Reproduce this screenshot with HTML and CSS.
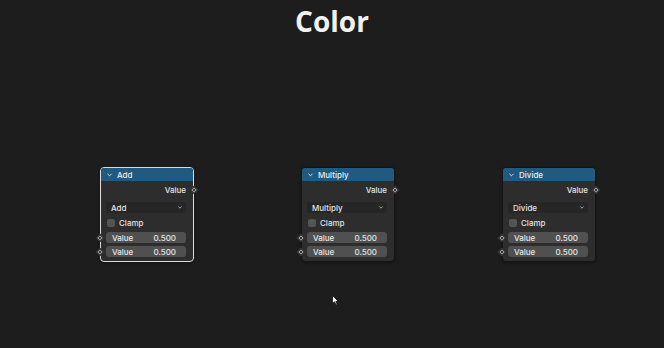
FILE: index.html
```html
<!DOCTYPE html>
<html>
<head>
<meta charset="utf-8">
<link rel="stylesheet" href="styles.css">
</head>
<body>
<div class="page">
  <h1 class="title">Color</h1>
  <div class="nodes">
    <div class="node selected">
      <div class="node-header"><svg class="chev" viewBox="0 0 6 4"><polyline points="0.5,0.5 3,3 5.5,0.5"/></svg><span>Add</span></div>
      <div class="node-body">
        <div class="row out"><span>Value</span><i class="socket right"></i></div>
        <div class="row drop-row"><div class="dropdown"><span>Add</span><svg class="dchev" viewBox="0 0 6 4"><polyline points="0.5,0.5 3,3 5.5,0.5"/></svg></div></div>
        <div class="row check-row"><span class="checkbox"></span><span>Clamp</span></div>
        <div class="row in first"><i class="socket left"></i><div class="field"><span>Value</span><span>0.500</span></div></div>
        <div class="row in"><i class="socket left"></i><div class="field"><span>Value</span><span>0.500</span></div></div>
      </div>
    </div>
    <div class="node">
      <div class="node-header"><svg class="chev" viewBox="0 0 6 4"><polyline points="0.5,0.5 3,3 5.5,0.5"/></svg><span>Multiply</span></div>
      <div class="node-body">
        <div class="row out"><span>Value</span><i class="socket right"></i></div>
        <div class="row drop-row"><div class="dropdown"><span>Multiply</span><svg class="dchev" viewBox="0 0 6 4"><polyline points="0.5,0.5 3,3 5.5,0.5"/></svg></div></div>
        <div class="row check-row"><span class="checkbox"></span><span>Clamp</span></div>
        <div class="row in first"><i class="socket left"></i><div class="field"><span>Value</span><span>0.500</span></div></div>
        <div class="row in"><i class="socket left"></i><div class="field"><span>Value</span><span>0.500</span></div></div>
      </div>
    </div>
    <div class="node">
      <div class="node-header"><svg class="chev" viewBox="0 0 6 4"><polyline points="0.5,0.5 3,3 5.5,0.5"/></svg><span>Divide</span></div>
      <div class="node-body">
        <div class="row out"><span>Value</span><i class="socket right"></i></div>
        <div class="row drop-row"><div class="dropdown"><span>Divide</span><svg class="dchev" viewBox="0 0 6 4"><polyline points="0.5,0.5 3,3 5.5,0.5"/></svg></div></div>
        <div class="row check-row"><span class="checkbox"></span><span>Clamp</span></div>
        <div class="row in first"><i class="socket left"></i><div class="field"><span>Value</span><span>0.500</span></div></div>
        <div class="row in"><i class="socket left"></i><div class="field"><span>Value</span><span>0.500</span></div></div>
      </div>
    </div>
  </div>
  <svg class="cursor" viewBox="0 0 7 11"><path d="M0.5,0.5 L0.5,8.5 L2.5,6.8 L4,10 L5.2,9.4 L3.8,6.3 L6.3,6.3 Z"/></svg>
</div>
</body>
</html>
```
FILE: styles.css
```css
html, body {
  margin: 0;
  padding: 0;
  background: #1d1d1d;
}
.page {
  position: relative;
  width: 664px;
  height: 348px;
  overflow: hidden;
  font-family: "Inter", "DejaVu Sans", sans-serif;
}
.title {
  margin: 5px 0 0 0;
  font-family: "Open Sans", "Noto Sans", sans-serif;
  font-weight: 700;
  font-size: 28px;
  line-height: 32px;
  text-align: center;
  color: #f2f2f2;
}
.nodes {
  display: flex;
  gap: 107px;
  padding: 130px 0 0 100px;
}
.node {
  width: 94px;
  box-sizing: border-box;
  border: 1px solid #151515;
  border-radius: 4px;
  background: #2d2d2d;
  box-shadow: 0 1px 3px rgba(0,0,0,0.35);
}
.node.selected {
  border-color: #dcdcdc;
}
.node-header {
  height: 13px;
  background: #205b7f;
  border-radius: 3px 3px 0 0;
  display: flex;
  align-items: center;
  padding-left: 6px;
  color: #ececec;
  font-size: 8px;
  font-weight: 500;
}
.chev {
  width: 5px;
  height: 4px;
  margin-right: 5px;
  fill: none;
  stroke: #e6e6e6;
  stroke-width: 1.1;
}
.node-body {
  padding: 2px 7px 4px 5px;
  color: #e2e2e2;
  font-size: 8px;
  font-weight: 500;
}
.row {
  position: relative;
  display: flex;
  align-items: center;
}
.row.out {
  height: 14px;
  justify-content: flex-end;
}
.socket {
  position: absolute;
  top: 50%;
  width: 4px;
  height: 4px;
  margin-top: -3px;
  background: #a8a8a8;
  border: 1px solid #141414;
  transform: rotate(45deg);
}
.socket::after {
  content: "";
  position: absolute;
  left: 1.2px;
  top: 1.2px;
  width: 1.6px;
  height: 1.6px;
  background: #2a2a2a;
}
.socket.right {
  right: -11px;
}
.socket.left {
  left: -9px;
}
.drop-row {
  margin-top: 5px;
}
.dropdown {
  flex: 1;
  height: 11px;
  background: #262626;
  border-radius: 3px;
  display: flex;
  align-items: center;
  justify-content: space-between;
  padding: 0 4px 0 5px;
  color: #e4e4e4;
}
.dchev {
  width: 4px;
  height: 3px;
  fill: none;
  stroke: #cfcfcf;
  stroke-width: 1.1;
}
.check-row {
  height: 14px;
  margin-top: 3px;
}
.checkbox {
  width: 8px;
  height: 8px;
  margin: 0 4px 0 1px;
  background: #545454;
  border-radius: 2px;
}
.row.in {
  margin-top: 3px;
}
.row.in.first {
  margin-top: 2px;
}
.field {
  flex: 1;
  height: 11px;
  background: #505050;
  border-radius: 3px;
  display: flex;
  align-items: center;
  justify-content: space-between;
  padding: 0 10px 0 6px;
  color: #e6e6e6;
}
.cursor {
  position: absolute;
  left: 332px;
  top: 295px;
  width: 7px;
  height: 11px;
  fill: #ffffff;
  stroke: #000000;
  stroke-width: 0.7;
}
```
